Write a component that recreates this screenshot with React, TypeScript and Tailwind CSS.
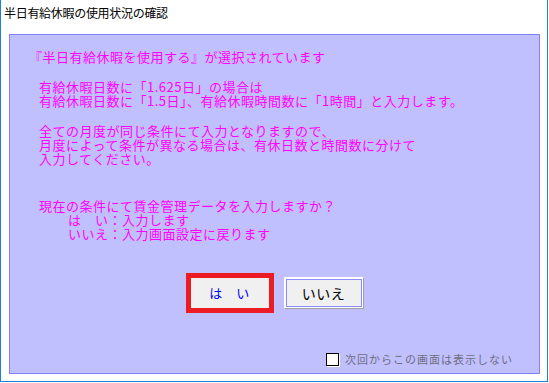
import React from "react";

const jp = "font-['Noto_Sans_CJK_JP',sans-serif]";

export default function App() {
  return (
    <div className={`w-[549px] h-[383px] bg-white ${jp}`}>
      <div className="w-[548px] h-[382px] border-l border-r border-b border-[#1883d7] bg-white flex flex-col">
        <div className="h-[34px] pl-[3px] pt-[6px] text-[12px] leading-[14px] tracking-[-0.3px] text-black">
          半日有給休暇の使用状況の確認
        </div>
        <div className="ml-[8px] w-[531px] h-[340px] border border-[#8080ff] bg-[#c0c0ff] flex flex-col">
          <div className="pt-[15px] pl-[19px] text-[13px] leading-[14px] tracking-[0.5px] text-[#ff00ff]">
            <div>『半日有給休暇を使用する』が選択されています</div>
            <div className="mt-[16px] ml-[10px]">
              <div>有給休暇日数に「1.625日」の場合は</div>
              <div>有給休暇日数に「1.5日」、有給休暇時間数に「1時間」と入力します。</div>
            </div>
            <div className="mt-[16px] ml-[10px]">
              <div>全ての月度が同じ条件にて入力となりますので、</div>
              <div>月度によって条件が異なる場合は、有休日数と時間数に分けて</div>
              <div>入力してください。</div>
            </div>
            <div className="mt-[33px] ml-[10px]">
              <div>現在の条件にて賃金管理データを入力しますか？</div>
              <div className="ml-[29px]">は　い：入力します</div>
              <div className="ml-[29px]">いいえ：入力画面設定に戻ります</div>
            </div>
          </div>
          <div className="mt-[32px] h-[40px] flex items-center justify-center gap-[10px]">
            <div className="w-[88px] h-[40px] border-[5px] border-[#ed1c24] bg-[#f0f0f0] flex items-center justify-center text-[13px] tracking-[0.5px] text-[#0000ff]">
              は　い
            </div>
            <div className="w-[80px] h-[32px] border border-t-white border-l-white border-r-[#a0a0a0] border-b-[#a0a0a0] bg-white p-[1px] flex">
              <div className="flex-1 border border-[#8c8cff] bg-[#f0f0f0] flex items-center justify-center text-[14px] tracking-[0.5px] text-black">
                いいえ
              </div>
            </div>
          </div>
          <div className="mt-[40px] h-[13px] flex items-center pl-[316px]">
            <div className="w-[13px] h-[13px] border border-black bg-white shadow-[1px_1px_0_#ffffff]" />
            <div className="ml-[6px] text-[11px] leading-[13px] tracking-[1px] text-[#6e6e80]">
              次回からこの画面は表示しない
            </div>
          </div>
        </div>
      </div>
    </div>
  );
}
